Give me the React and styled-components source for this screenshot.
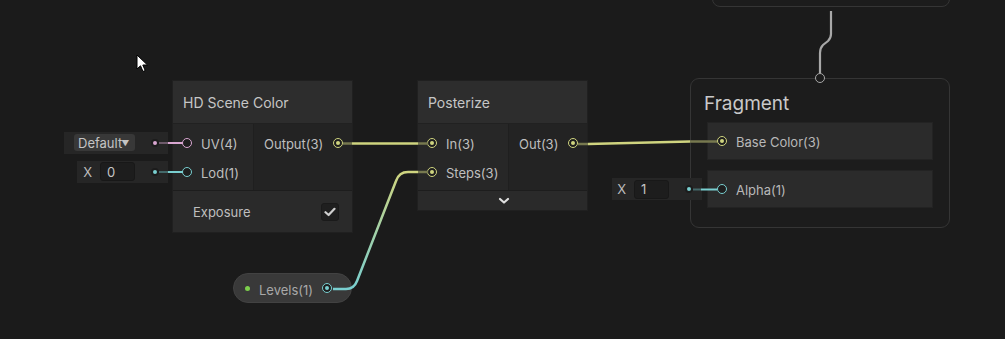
import React from 'react';
import styled, { createGlobalStyle } from 'styled-components';

const GlobalStyle = createGlobalStyle`
  html, body {
    margin: 0;
    padding: 0;
    background: #1b1b1b;
  }
  body {
    font-family: Inter, "Noto Sans", "Liberation Sans", sans-serif;
    -webkit-font-smoothing: antialiased;
  }
`;

const YELLOW = '#cfd47f';
const TEAL = '#79cfd0';
const PINK = '#d9a6d1';
const GREY = '#a8a8a8';

const App = () => {
  return (
    <Canvas>
      <GlobalStyle />

      <TopContext>
        <ContextPort $x={118} $y={5} />
      </TopContext>

      <Node $x={173} $y={81} $w={179}>
        <Header>HD Scene Color</Header>
        <Ports>
          <InputCol $w={80}>
            <PortRow>
              <Ring $color={PINK} />
              <Label>UV(4)</Label>
              <InlineField $w={104}>
                <Dropdown>Default<Caret>▼</Caret></Dropdown>
                <FieldDot $color={PINK} />
              </InlineField>
            </PortRow>
            <PortRow>
              <Ring $color={TEAL} />
              <Label>Lod(1)</Label>
              <InlineField $w={91}>
                <AxisLabel>X</AxisLabel>
                <NumberBox>0</NumberBox>
                <FieldDot $color={TEAL} />
              </InlineField>
            </PortRow>
          </InputCol>
          <OutputCol>
            <PortRow $out>
              <Label>Output(3)</Label>
              <Ring $color={YELLOW} $filled />
            </PortRow>
          </OutputCol>
        </Ports>
        <SettingRow>
          <span>Exposure</span>
          <Checkbox>
            <svg width="12" height="10" viewBox="0 0 12 10">
              <path d="M1.5 5.2 L4.6 8 L10.5 1.8" fill="none" stroke="#cfcfcf" strokeWidth="2.2" strokeLinecap="round" strokeLinejoin="round" />
            </svg>
          </Checkbox>
        </SettingRow>
      </Node>

      <Node $x={418} $y={81} $w={169}>
        <Header>Posterize</Header>
        <Ports>
          <InputCol $w={90}>
            <PortRow>
              <Ring $color={YELLOW} $filled />
              <Label>In(3)</Label>
            </PortRow>
            <PortRow>
              <Ring $color={YELLOW} $filled />
              <Label>Steps(3)</Label>
            </PortRow>
          </InputCol>
          <OutputCol>
            <PortRow $out>
              <Label>Out(3)</Label>
              <Ring $color={YELLOW} $filled />
            </PortRow>
          </OutputCol>
        </Ports>
        <ExpandBar>
          <svg width="12" height="8" viewBox="0 0 12 8">
            <path d="M2 2 L6 5.5 L10 2" fill="none" stroke="#e0e0e0" strokeWidth="2.2" strokeLinecap="round" strokeLinejoin="round" />
          </svg>
        </ExpandBar>
      </Node>

      <Context $x={690} $y={78}>
        <ContextPort $x={129} $y={-1} />
        <ContextTitle>Fragment</ContextTitle>
        <Block>
          <Ring $color={YELLOW} $filled />
          <BlockLabel>Base Color(3)</BlockLabel>
        </Block>
        <Block>
          <Ring $color={TEAL} />
          <BlockLabel>Alpha(1)</BlockLabel>
          <InlineField $w={90} $gap={6}>
            <AxisLabel>X</AxisLabel>
            <NumberBox>1</NumberBox>
            <FieldDot $color={TEAL} />
          </InlineField>
        </Block>
      </Context>

      <Property $x={233} $y={273}>
        <GreenDot />
        <PropLabel>Levels(1)</PropLabel>
        <Ring $color={TEAL} $filled />
      </Property>

      <Wires width="1005" height="339" viewBox="0 0 1005 339">
        <defs>
          <linearGradient id="steps" gradientUnits="userSpaceOnUse" x1="0" y1="289" x2="0" y2="172">
            <stop offset="0" stopColor={TEAL} />
            <stop offset="1" stopColor={YELLOW} />
          </linearGradient>
        </defs>
        <path d="M159 143 L168 143" stroke="#6e5a6b" strokeWidth="2" />
        <path d="M168 143 L183 143" stroke={PINK} strokeWidth="2" />
        <path d="M159 172 L168 172" stroke="#44696a" strokeWidth="2" />
        <path d="M168 172 L183 172" stroke={TEAL} strokeWidth="2" />

        <path d="M343 143.5 L352 143.5" stroke="#77794f" strokeWidth="2.5" />
        <path d="M352 143.5 L418 143.5" stroke={YELLOW} strokeWidth="2.5" />
        <path d="M418 143.5 L428 143.5" stroke="#77794f" strokeWidth="2.5" />

        <path d="M578 144 L588 144" stroke="#77794f" strokeWidth="2.5" />
        <path d="M588 144 L690 141.5" stroke={YELLOW} strokeWidth="2.5" />
        <path d="M690 141.5 L717 141.5" stroke="#77794f" strokeWidth="2.5" />

        <path d="M333 289 L346 289 Q354 289 357 281 L396 181 Q399 172 408 172 L418 172" fill="none" stroke="url(#steps)" strokeWidth="2.5" />
        <path d="M418 172 L428 172" stroke="#77794f" strokeWidth="2.5" />

        <path d="M693 189.5 L701 189.5" stroke="#44696a" strokeWidth="2" />
        <path d="M701 189.5 L717 189.5" stroke={TEAL} strokeWidth="2" />

        <path d="M831 11 L831 34 Q831 38 828 41 L823 45 Q820 48 820 53 L820 73" fill="none" stroke={GREY} strokeWidth="2.2" />
      </Wires>

      <Cursor width="13" height="19" viewBox="0 0 13 19">
        <path d="M1 1 L1 15 L4.5 11.8 L7 17.5 L9.2 16.5 L6.8 11 L11.5 11 Z" fill="#fff" stroke="#000" strokeWidth="1" strokeLinejoin="round" />
      </Cursor>
    </Canvas>
  );
};

export default App;

const Canvas = styled.div`
  position: relative;
  width: 1005px;
  height: 339px;
  overflow: hidden;
  background: #1b1b1b;
`;

const Node = styled.div`
  position: absolute;
  left: ${p => p.$x}px;
  top: ${p => p.$y}px;
  width: ${p => p.$w}px;
  display: flex;
  flex-direction: column;
  background: #1f1f1f;
  box-shadow: 0 0 0 1px #202020;
`;

const Header = styled.div`
  height: 42px;
  display: flex;
  align-items: center;
  padding-left: 10px;
  background: #2d2d2d;
  color: #c6c6c6;
  font-size: 14px;
  border-bottom: 1px solid #212121;
`;

const Ports = styled.div`
  display: flex;
  height: 66px;
  border-bottom: 1px solid #1d1d1d;
`;

const InputCol = styled.div`
  width: ${p => p.$w}px;
  padding-top: 4px;
  background: #272727;
  border-right: 1px solid #1f1f1f;
`;

const OutputCol = styled.div`
  flex: 1;
  padding-top: 4px;
  background: #232323;
`;

const PortRow = styled.div`
  position: relative;
  height: 29px;
  display: flex;
  align-items: center;
  gap: ${p => (p.$out ? '0' : '9px')};
  justify-content: ${p => (p.$out ? 'space-between' : 'flex-start')};
  padding: ${p => (p.$out ? '0 9px 0 10px' : '0 0 0 9px')};
`;

const Ring = styled.span`
  position: relative;
  flex: none;
  width: 10px;
  height: 10px;
  box-sizing: border-box;
  border-radius: 50%;
  border: 1.6px solid ${p => p.$color};
  background: #1e1e1e;
  &::after {
    content: '';
    display: ${p => (p.$filled ? 'block' : 'none')};
    position: absolute;
    left: 50%;
    top: 50%;
    width: 4px;
    height: 4px;
    margin: -2px 0 0 -2px;
    border-radius: 50%;
    background: ${p => p.$color};
  }
`;

const Label = styled.span`
  color: #bfbfbf;
  font-size: 13px;
  white-space: nowrap;
  padding-top: 2px;
`;

const InlineField = styled.div`
  position: absolute;
  right: calc(100% + ${p => p.$gap || 5}px);
  top: 50%;
  transform: translateY(-50%);
  width: ${p => p.$w}px;
  height: 22px;
  box-sizing: border-box;
  display: flex;
  align-items: center;
  justify-content: flex-end;
  gap: 6px;
  padding-right: 9px;
  background: #262626;
`;

const Dropdown = styled.div`
  display: flex;
  align-items: center;
  width: 61px;
  height: 17px;
  box-sizing: border-box;
  padding-left: 4px;
  margin-right: 10px;
  border-radius: 3px;
  background: #383838;
  color: #c4c4c4;
  font-size: 13px;
  overflow: hidden;
  white-space: nowrap;
`;

const Caret = styled.span`
  font-size: 8px;
  margin-left: -1px;
  color: #c4c4c4;
`;

const AxisLabel = styled.span`
  color: #bdbdbd;
  font-size: 13px;
  margin-right: 2px;
`;

const NumberBox = styled.div`
  width: 35px;
  height: 19px;
  box-sizing: border-box;
  padding-left: 6px;
  margin-right: 10px;
  display: flex;
  align-items: center;
  border-radius: 3px;
  background: #1d1d1d;
  border: 1px solid #181818;
  color: #c4c4c4;
  font-size: 13px;
`;

const FieldDot = styled.span`
  width: 8px;
  height: 8px;
  box-sizing: border-box;
  border-radius: 50%;
  background: ${p => p.$color};
  border: 2px solid #1c1c1c;
`;

const SettingRow = styled.div`
  height: 41px;
  display: flex;
  align-items: center;
  justify-content: space-between;
  padding: 0 13px 0 20px;
  background: #2a2a2a;
  color: #bfbfbf;
  font-size: 13px;
`;

const Checkbox = styled.div`
  width: 18px;
  height: 18px;
  box-sizing: border-box;
  display: flex;
  align-items: center;
  justify-content: center;
  border-radius: 3px;
  background: #1f1f1f;
  border: 1px solid #1a1a1a;
`;

const ExpandBar = styled.div`
  height: 19px;
  display: flex;
  align-items: center;
  justify-content: center;
  padding-left: 2px;
  background: #2a2a2a;
`;

const Context = styled.div`
  position: absolute;
  left: ${p => p.$x}px;
  top: ${p => p.$y}px;
  width: 260px;
  height: 150px;
  box-sizing: border-box;
  display: flex;
  flex-direction: column;
  gap: 10px;
  padding: 0 16px 0 16px;
  border: 1px solid #353535;
  border-radius: 9px;
  background: #1c1c1c;
`;

const TopContext = styled.div`
  position: absolute;
  left: 712px;
  top: -12px;
  width: 238px;
  height: 19px;
  box-sizing: border-box;
  border: 1px solid #353535;
  border-radius: 8px;
  background: #1c1c1c;
`;

const ContextPort = styled.span`
  position: absolute;
  left: ${p => p.$x}px;
  top: ${p => p.$y}px;
  width: 10px;
  height: 10px;
  box-sizing: border-box;
  margin: -5px 0 0 -5px;
  border-radius: 50%;
  border: 1.6px solid ${GREY};
  background: #1c1c1c;
`;

const ContextTitle = styled.div`
  height: 33px;
  display: flex;
  align-items: flex-end;
  margin-left: -3px;
  line-height: 19px;
  transform: translateY(1px);
  color: #c9c9c9;
  font-size: 19px;
`;

const Block = styled.div`
  position: relative;
  height: 38px;
  box-sizing: border-box;
  display: flex;
  align-items: center;
  gap: 9px;
  padding-left: 9px;
  background: #2b2b2b;
  border: 1px solid #232323;
`;

const BlockLabel = styled.span`
  color: #b8b8b8;
  font-size: 13px;
  padding-top: 2px;
`;

const Property = styled.div`
  position: absolute;
  left: ${p => p.$x}px;
  top: ${p => p.$y}px;
  width: 119px;
  height: 30px;
  box-sizing: border-box;
  display: flex;
  align-items: center;
  padding: 0 19px 0 11px;
  border-radius: 15px;
  background: #393939;
  border: 1px solid #424242;
`;

const GreenDot = styled.span`
  width: 5px;
  height: 5px;
  border-radius: 50%;
  background: #7ccf4c;
  margin-right: 9px;
`;

const PropLabel = styled.span`
  flex: 1;
  color: #a8a8a8;
  font-size: 13px;
  padding-top: 4px;
`;

const Wires = styled.svg`
  position: absolute;
  left: 0;
  top: 0;
  pointer-events: none;
  stroke-linecap: butt;
`;

const Cursor = styled.svg`
  position: absolute;
  left: 136px;
  top: 54px;
`;
